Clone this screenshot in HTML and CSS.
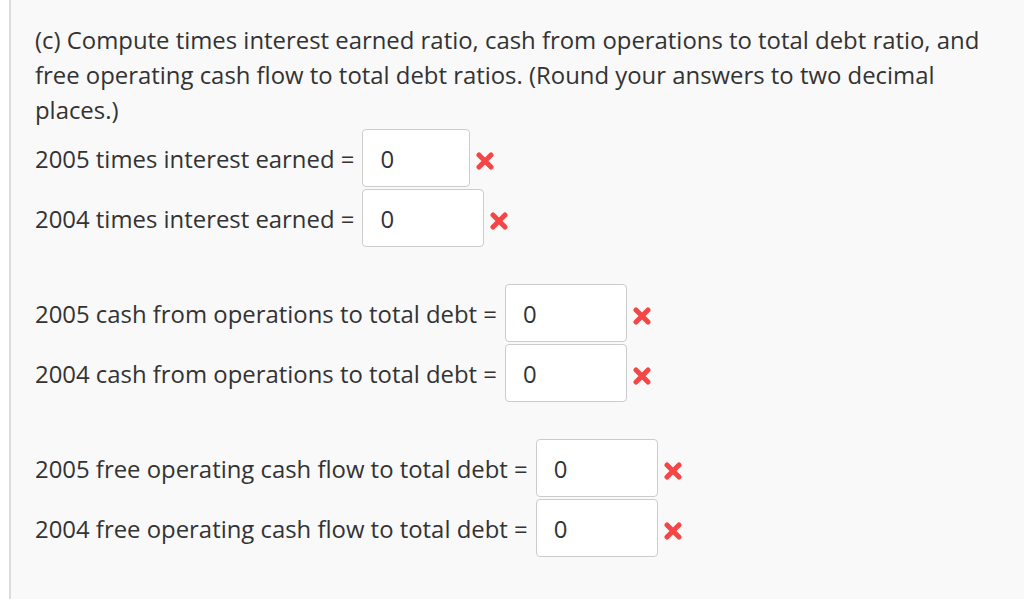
FILE: index.html
```html
<!DOCTYPE html>
<html>
<head>
<meta charset="utf-8">
<link rel="stylesheet" href="styles.css">
</head>
<body>
<div class="panel">
  <p class="prompt">(c) Compute times interest earned ratio, cash from operations to total debt ratio, and free operating cash flow to total debt ratios. (Round your answers to two decimal places.)</p>
  <div class="group">
    <div class="row"><span class="label">2005 times interest earned =</span><span class="field">0</span><svg class="mark" viewBox="0 0 18 18"><path d="M3 3 L15 15 M15 3 L3 15"/></svg></div>
    <div class="row"><span class="label">2004 times interest earned =</span><span class="field wide">0</span><svg class="mark" viewBox="0 0 18 18"><path d="M3 3 L15 15 M15 3 L3 15"/></svg></div>
  </div>
  <div class="group">
    <div class="row"><span class="label">2005 cash from operations to total debt =</span><span class="field wide">0</span><svg class="mark" viewBox="0 0 18 18"><path d="M3 3 L15 15 M15 3 L3 15"/></svg></div>
    <div class="row"><span class="label">2004 cash from operations to total debt =</span><span class="field wide">0</span><svg class="mark" viewBox="0 0 18 18"><path d="M3 3 L15 15 M15 3 L3 15"/></svg></div>
  </div>
  <div class="group">
    <div class="row"><span class="label">2005 free operating cash flow to total debt =</span><span class="field wide">0</span><svg class="mark" viewBox="0 0 18 18"><path d="M3 3 L15 15 M15 3 L3 15"/></svg></div>
    <div class="row"><span class="label">2004 free operating cash flow to total debt =</span><span class="field wide">0</span><svg class="mark" viewBox="0 0 18 18"><path d="M3 3 L15 15 M15 3 L3 15"/></svg></div>
  </div>
</div>
</body>
</html>
```
FILE: styles.css
```css
html, body {
  margin: 0;
  padding: 0;
  background: #ffffff;
  height: 100%;
}
body {
  font-family: "Open Sans", "Liberation Sans", sans-serif;
  color: #333333;
  font-size: 23.9px;
}
.panel {
  margin-left: 9px;
  border-left: 2px solid #dcdcdc;
  background: #f9f9f9;
  min-height: 599px;
  box-sizing: border-box;
  padding: 22px 20px 0 24px;
}
.prompt {
  margin: 0;
  line-height: 35px;
  max-width: 960px;
}
.group {
  margin-bottom: 35px;
}
.group:first-of-type {
  margin-top: 1px;
}
.group:last-of-type .row:first-child {
  margin-top: 1px;
}
.row {
  display: flex;
  align-items: center;
  height: 60px;
}
.label {
  white-space: nowrap;
  margin-right: 8px;
}
.field {
  box-sizing: border-box;
  width: 108px;
  height: 58px;
  background: #ffffff;
  border: 1.5px solid #cccccc;
  border-radius: 4px;
  padding-left: 17px;
  display: flex;
  align-items: center;
}
.field.wide {
  width: 122px;
}
.mark {
  width: 18px;
  height: 18px;
  margin-left: 6px;
  margin-top: 6px;
  fill: none;
  stroke: #f44646;
  stroke-width: 5;
  stroke-linecap: round;
}
```
